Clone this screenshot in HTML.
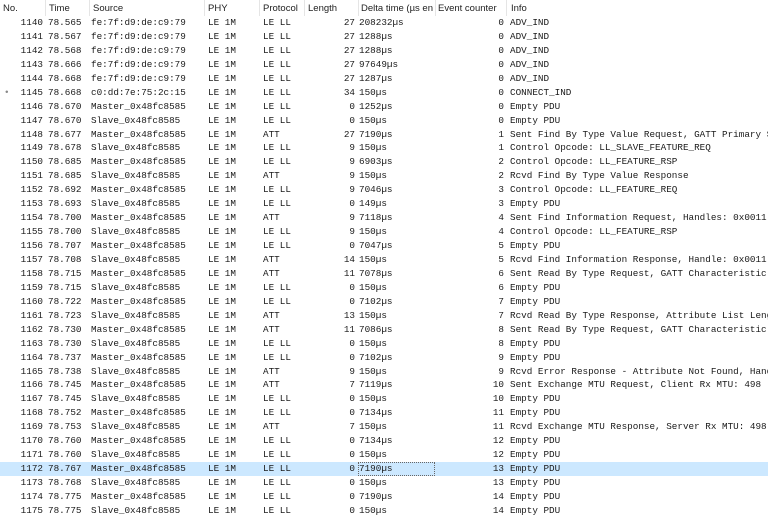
<!DOCTYPE html><html><head><meta charset="utf-8"><style>
body{margin:0;width:768px;height:518px;overflow:hidden;background:#fff;position:relative;font-family:"Liberation Mono",monospace;font-size:9.3px;color:#1a1a1a}
.h{position:absolute;top:0;left:0;width:768px;height:16px;font-family:"Liberation Sans",sans-serif;font-size:9.5px;color:#222;overflow:hidden}
.h span{position:absolute;top:3px}
.h i{position:absolute;top:0;width:1px;height:16px;background:#e5e5e5}
.r{position:absolute;left:0;width:768px;height:14px;line-height:14px;white-space:nowrap;overflow:hidden}
.r span{position:absolute;top:0}
.sel{background:#cce8ff}
.no{left:0px;width:43px;text-align:right}
.t{left:48px}.s{left:91px}.p{left:208px}.pr{left:263px}
.l{left:300px;width:55px;text-align:right}
.d{left:359px}.e{left:440px;width:64px;text-align:right}.inf{left:510px}
.fb{position:absolute;left:358px;top:0;width:75px;height:12px;border:1px dotted #666}
</style></head><body>
<div class="h"><span style="left:3px">No.</span><span style="left:49px">Time</span><span style="left:93px">Source</span><span style="left:208px">PHY</span><span style="left:263px">Protocol</span><span style="left:308px">Length</span><span style="left:361px">Delta time (µs en</span><span style="left:436px;background:#fff;padding-left:2px">Event counter</span><span style="left:511px">Info</span>
<i style="left:45px"></i><i style="left:89px"></i><i style="left:204px"></i><i style="left:259px"></i><i style="left:304px"></i><i style="left:358px"></i><i style="left:435px"></i><i style="left:506px"></i></div>
<div id="rows"></div>
<script>
var R=[
[1140,"78.565","fe:7f:d9:de:c9:79",27,"208232µs",0,"ADV_IND"],
[1141,"78.567","fe:7f:d9:de:c9:79",27,"1288µs",0,"ADV_IND"],
[1142,"78.568","fe:7f:d9:de:c9:79",27,"1288µs",0,"ADV_IND"],
[1143,"78.666","fe:7f:d9:de:c9:79",27,"97649µs",0,"ADV_IND"],
[1144,"78.668","fe:7f:d9:de:c9:79",27,"1287µs",0,"ADV_IND"],
[1145,"78.668","c0:dd:7e:75:2c:15",34,"150µs",0,"CONNECT_IND"],
[1146,"78.670","Master_0x48fc8585",0,"1252µs",0,"Empty PDU"],
[1147,"78.670","Slave_0x48fc8585",0,"150µs",0,"Empty PDU"],
[1148,"78.677","Master_0x48fc8585",27,"7190µs",1,"Sent Find By Type Value Request, GATT Primary Service Declaration","ATT"],
[1149,"78.678","Slave_0x48fc8585",9,"150µs",1,"Control Opcode: LL_SLAVE_FEATURE_REQ"],
[1150,"78.685","Master_0x48fc8585",9,"6903µs",2,"Control Opcode: LL_FEATURE_RSP"],
[1151,"78.685","Slave_0x48fc8585",9,"150µs",2,"Rcvd Find By Type Value Response","ATT"],
[1152,"78.692","Master_0x48fc8585",9,"7046µs",3,"Control Opcode: LL_FEATURE_REQ"],
[1153,"78.693","Slave_0x48fc8585",0,"149µs",3,"Empty PDU"],
[1154,"78.700","Master_0x48fc8585",9,"7118µs",4,"Sent Find Information Request, Handles: 0x0011..0x0011","ATT"],
[1155,"78.700","Slave_0x48fc8585",9,"150µs",4,"Control Opcode: LL_FEATURE_RSP"],
[1156,"78.707","Master_0x48fc8585",0,"7047µs",5,"Empty PDU"],
[1157,"78.708","Slave_0x48fc8585",14,"150µs",5,"Rcvd Find Information Response, Handle: 0x0011","ATT"],
[1158,"78.715","Master_0x48fc8585",11,"7078µs",6,"Sent Read By Type Request, GATT Characteristic","ATT"],
[1159,"78.715","Slave_0x48fc8585",0,"150µs",6,"Empty PDU"],
[1160,"78.722","Master_0x48fc8585",0,"7102µs",7,"Empty PDU"],
[1161,"78.723","Slave_0x48fc8585",13,"150µs",7,"Rcvd Read By Type Response, Attribute List Length","ATT"],
[1162,"78.730","Master_0x48fc8585",11,"7086µs",8,"Sent Read By Type Request, GATT Characteristic","ATT"],
[1163,"78.730","Slave_0x48fc8585",0,"150µs",8,"Empty PDU"],
[1164,"78.737","Master_0x48fc8585",0,"7102µs",9,"Empty PDU"],
[1165,"78.738","Slave_0x48fc8585",9,"150µs",9,"Rcvd Error Response - Attribute Not Found, Handle","ATT"],
[1166,"78.745","Master_0x48fc8585",7,"7119µs",10,"Sent Exchange MTU Request, Client Rx MTU: 498","ATT"],
[1167,"78.745","Slave_0x48fc8585",0,"150µs",10,"Empty PDU"],
[1168,"78.752","Master_0x48fc8585",0,"7134µs",11,"Empty PDU"],
[1169,"78.753","Slave_0x48fc8585",7,"150µs",11,"Rcvd Exchange MTU Response, Server Rx MTU: 498","ATT"],
[1170,"78.760","Master_0x48fc8585",0,"7134µs",12,"Empty PDU"],
[1171,"78.760","Slave_0x48fc8585",0,"150µs",12,"Empty PDU"],
[1172,"78.767","Master_0x48fc8585",0,"7190µs",13,"Empty PDU"],
[1173,"78.768","Slave_0x48fc8585",0,"150µs",13,"Empty PDU"],
[1174,"78.775","Master_0x48fc8585",0,"7190µs",14,"Empty PDU"],
[1175,"78.775","Slave_0x48fc8585",0,"150µs",14,"Empty PDU"]];
var h="";
R.forEach(function(r,i){var top=(16+i*13.94).toFixed(2);
h+='<div class="r'+(r[0]==1172?' sel':'')+'" style="top:'+top+'px">'+(r[0]==1145?'<span style="left:4px;color:#888">•</span>':'')+
'<span class="no">'+r[0]+'</span><span class="t">'+r[1]+'</span><span class="s">'+r[2]+'</span><span class="p">LE 1M</span><span class="pr">'+(r[7]||'LE LL')+'</span><span class="l">'+r[3]+'</span>'+(r[0]==1172?'<div class="fb"></div>':'')+'<span class="d">'+r[4]+'</span><span class="e">'+r[5]+'</span><span class="inf">'+r[6]+'</span></div>';});
document.getElementById("rows").innerHTML=h;
</script>
</body></html>
